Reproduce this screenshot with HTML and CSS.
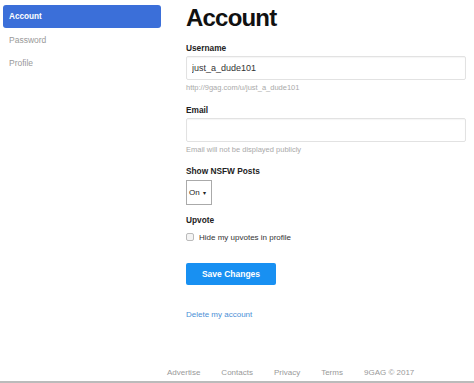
FILE: index.html
```html
<!DOCTYPE html>
<html lang="en">
  <head>
    <meta charset="UTF-8" />
    <title>Settings - Account</title>
    <link rel="stylesheet" href="styles.css">
  </head>
  <body>
    <div class="page">
      <div class="sidebar">
        <a class="nav-item active" href="#">Account</a>
        <a class="nav-item" href="#">Password</a>
        <a class="nav-item" href="#">Profile</a>
      </div>

      <div class="main">
        <h1>Account</h1>

        <div class="field username-field">
          <label for="username">Username</label>
          <input type="text" id="username" value="just_a_dude101" />
          <div class="hint">http://9gag.com/u/just_a_dude101</div>
        </div>

        <div class="field">
          <label for="email">Email</label>
          <input type="text" id="email" />
          <div class="hint">Email will not be displayed publicly</div>
        </div>

        <div class="field nsfw-field">
          <label>Show NSFW Posts</label>
          <div class="select">On <span class="caret">▾</span></div>
        </div>

        <div class="field">
          <label>Upvote</label>
          <div class="check-row">
            <span class="checkbox"></span>
            <span>Hide my upvotes in profile</span>
          </div>
        </div>

        <button class="save-button">Save Changes</button>

        <a class="delete-link" href="#">Delete my account</a>
      </div>
    </div>

    <div class="footer">
      <a href="#">Advertise</a>
      <a href="#">Contacts</a>
      <a href="#">Privacy</a>
      <a href="#">Terms</a>
      <span>9GAG © 2017</span>
    </div>
    <div class="bottom-bar"></div>
  </body>
</html>
```

FILE: styles.css
```css
body {
  font-family: "Liberation Sans", Arial, sans-serif;
  background: white;
  color: #222;
  margin: 0;
  padding: 0;
}

a {
  text-decoration: none;
}

.page {
  display: flex;
  align-items: flex-start;
}

.sidebar {
  width: 158px;
  margin-left: 3px;
  margin-right: 25px;
  padding-top: 5px;
  display: flex;
  flex-direction: column;
}

.nav-item {
  height: 23px;
  line-height: 24px;
  padding-left: 6px;
  font-size: 8.5px;
  color: #999;
  border-radius: 3px;
}

.nav-item.active {
  background: #3b6fd9;
  color: white;
  font-weight: 700;
  font-size: 8.2px;
}

.main {
  width: 280px;
  padding-top: 4px;
  display: flex;
  flex-direction: column;
  align-items: flex-start;
}

h1 {
  margin: 0 0 10px;
  font-size: 24px;
  line-height: 28px;
  letter-spacing: -0.8px;
  font-weight: 700;
  color: #111;
}

.field {
  width: 100%;
  margin-bottom: 10px;
}

.username-field {
  margin-bottom: 11px;
}

.nsfw-field {
  margin-bottom: 9px;
}

.field label {
  display: block;
  font-size: 8.3px;
  line-height: 12px;
  font-weight: 700;
  margin-bottom: 2px;
}

.field input {
  display: block;
  box-sizing: border-box;
  width: 100%;
  height: 24px;
  padding: 0 5px;
  border: 1px solid #e2e2e2;
  border-radius: 2px;
  box-shadow: inset 0 1px 1px rgba(0, 0, 0, 0.04);
  font-family: inherit;
  font-size: 9px;
  color: #333;
  outline: none;
}

.hint {
  margin-top: 3px;
  font-size: 7.5px;
  line-height: 10px;
  color: #aaa;
}

.select {
  box-sizing: border-box;
  width: 26px;
  height: 25px;
  margin-top: 3px;
  border: 1px solid #aaa;
  display: flex;
  align-items: center;
  padding-left: 2px;
  font-size: 8px;
  color: #222;
}

.caret {
  font-size: 6px;
  margin-left: 3px;
}

.check-row {
  display: flex;
  align-items: center;
  margin-top: 5px;
  height: 12px;
  font-size: 8px;
  color: #333;
}

.checkbox {
  box-sizing: border-box;
  width: 8px;
  height: 8px;
  margin-right: 5px;
  border: 1px solid #bbb;
  border-radius: 2px;
  background: #f4f4f4;
}

.save-button {
  margin-top: 10px;
  width: 90px;
  height: 22px;
  border: none;
  border-radius: 2px;
  background: #1890f2;
  color: white;
  font-family: inherit;
  font-size: 8.5px;
  font-weight: 700;
  cursor: pointer;
}

.delete-link {
  margin-top: 24px;
  font-size: 8px;
  line-height: 12px;
  color: #4a8fd6;
}

.footer {
  display: flex;
  gap: 21px;
  padding-left: 167px;
  margin-top: 46px;
  margin-bottom: 2px;
  font-size: 8px;
  line-height: 12px;
  color: #999;
}

.footer a {
  color: #999;
}

.bottom-bar {
  height: 3px;
  background: #bbb;
}
```
